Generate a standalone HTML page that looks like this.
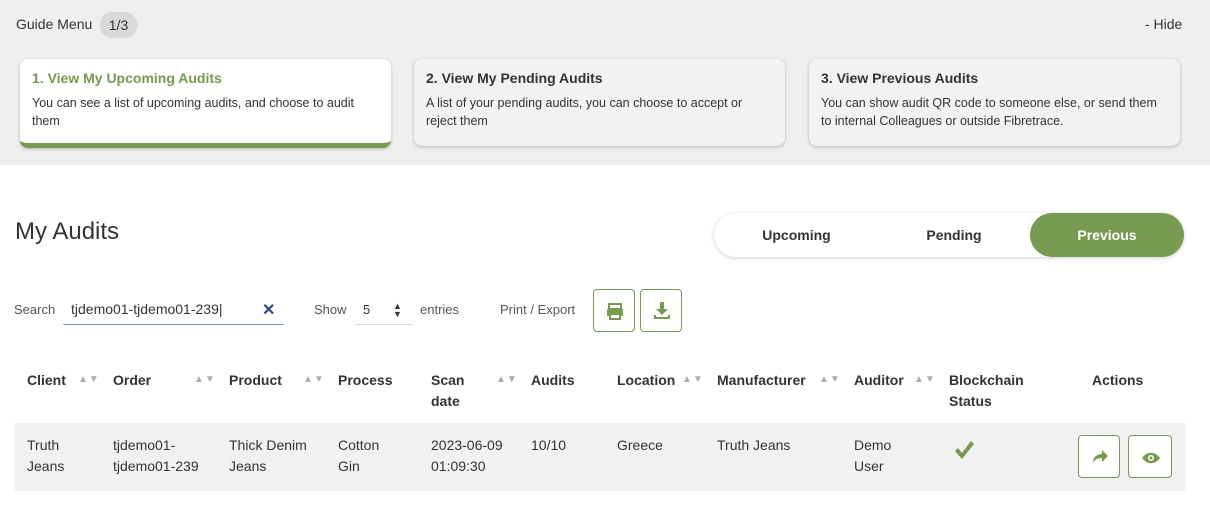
<!DOCTYPE html>
<html><head><meta charset="utf-8"><style>
*{box-sizing:border-box;margin:0;padding:0}
body{width:1210px;height:506px;background:#fff;font-family:"Liberation Sans",sans-serif;color:#333;position:relative;overflow:hidden}
.a{position:absolute}
.top{left:0;top:0;width:1210px;height:165px;background:#efefef}
.card{top:59px;width:371px;height:87px;background:#f2f2f2;border-radius:8px;box-shadow:0 1px 3px rgba(0,0,0,.25);padding:11px 22px 11px 12px}
.card h3{font-size:14px;font-weight:bold;color:#333;margin-bottom:8px}
.card p{font-size:12.5px;line-height:18px;color:#333}
.card.act{background:#fff;border-bottom:5px solid #769a4f}
.card.act h3{color:#769a4f}
.tog{left:714px;top:213px;width:470px;height:44px;border-radius:22px;background:#fff;box-shadow:0 1px 4px rgba(0,0,0,.2)}
.tog span{position:absolute;top:0;height:44px;line-height:44px;font-size:14px;font-weight:bold;text-align:center;color:#333}
.th{font-size:14px;font-weight:bold;color:#333;line-height:21px}
.td{font-size:14px;line-height:21px;color:#333}
.sort{font-size:10px;color:#aaa;letter-spacing:1px}
.btn{border:1px solid #769a4f;border-radius:4px;background:#fff}
</style></head><body>
<div class="a top"></div>
<div class="a" style="left:16px;top:16px;font-size:14px">Guide Menu</div>
<div class="a" style="left:100px;top:12px;width:37px;height:26px;border-radius:12px;background:#d9d9d9;font-size:14px;line-height:26px;text-align:center">1/3</div>
<div class="a" style="left:1145px;top:16px;font-size:14px">- Hide</div>
<div class="a card act" style="left:20px;height:89px"><h3>1. View My Upcoming Audits</h3><p>You can see a list of upcoming audits, and choose to audit them</p></div>
<div class="a card" style="left:414px"><h3>2. View My Pending Audits</h3><p style="padding-right:14px">A list of your pending audits, you can choose to accept or reject them</p></div>
<div class="a card" style="left:809px"><h3>3. View Previous Audits</h3><p>You can show audit QR code to someone else, or send them to internal Colleagues or outside Fibretrace.</p></div>

<div class="a" style="left:15px;top:218px;font-size:24px;color:#333">My Audits</div>
<div class="a tog"><span style="left:0;width:165px">Upcoming</span><span style="left:165px;width:150px">Pending</span><span style="left:316px;width:154px;background:#769a4f;color:#fff;border-radius:22px">Previous</span></div>

<div class="a" style="left:14px;top:302px;font-size:13px;color:#555">Search</div>
<div class="a" style="left:63px;top:297px;width:221px;height:28px;border-bottom:1px solid #7fa0c8;font-size:14px;padding:4px 8px">tjdemo01-tjdemo01-239|</div>
<div class="a" style="left:262px;top:300px;font-size:16px;font-weight:bold;color:#2a4a7f">✕</div>
<div class="a" style="left:314px;top:302px;font-size:13px;color:#555">Show</div>
<div class="a" style="left:355px;top:297px;width:58px;height:28px;border-bottom:1px solid #ddd;font-size:13px;padding:5px 8px">5<span style="position:absolute;left:38px;top:5px;font-size:9px;line-height:8px">▲<br>▼</span></div>
<div class="a" style="left:420px;top:302px;font-size:13px;color:#555">entries</div>
<div class="a" style="left:500px;top:302px;font-size:13px;color:#555">Print / Export</div>
<div class="a btn" style="left:593px;top:289px;width:42px;height:43px"><svg width="42" height="43" viewBox="0 0 42 43"><rect x="15" y="14" width="12" height="5" fill="none" stroke="#769a4f" stroke-width="2"/><rect x="13" y="19" width="16" height="7" rx="1" fill="#769a4f"/><rect x="16" y="24" width="10" height="5" fill="#fff" stroke="#769a4f" stroke-width="2"/></svg></div>
<div class="a btn" style="left:640px;top:289px;width:42px;height:43px"><svg width="42" height="43" viewBox="0 0 42 43"><path d="M19 12h4v7h4l-6 6-6-6h4z" fill="#769a4f"/><path d="M13 25v4h16v-4h-2v2H15v-2z" fill="#769a4f"/></svg></div>

<div class="a th" style="left:27px;top:370px">Client</div><div class="a sort" style="left:78px;top:374px">▲▼</div>
<div class="a th" style="left:113px;top:370px">Order</div><div class="a sort" style="left:194px;top:374px">▲▼</div>
<div class="a th" style="left:229px;top:370px">Product</div><div class="a sort" style="left:303px;top:374px">▲▼</div>
<div class="a th" style="left:338px;top:370px">Process</div>
<div class="a th" style="left:431px;top:370px">Scan<br>date</div><div class="a sort" style="left:496px;top:374px">▲▼</div>
<div class="a th" style="left:531px;top:370px">Audits</div>
<div class="a th" style="left:617px;top:370px">Location</div><div class="a sort" style="left:682px;top:374px">▲▼</div>
<div class="a th" style="left:717px;top:370px">Manufacturer</div><div class="a sort" style="left:819px;top:374px">▲▼</div>
<div class="a th" style="left:854px;top:370px">Auditor</div><div class="a sort" style="left:914px;top:374px">▲▼</div>
<div class="a th" style="left:949px;top:370px">Blockchain<br>Status</div>
<div class="a th" style="left:1092px;top:370px">Actions</div>

<div class="a" style="left:15px;top:423px;width:1170px;height:68px;background:#f1f1f1"></div>
<div class="a td" style="left:27px;top:435px">Truth<br>Jeans</div>
<div class="a td" style="left:113px;top:435px">tjdemo01-<br>tjdemo01-239</div>
<div class="a td" style="left:229px;top:435px">Thick Denim<br>Jeans</div>
<div class="a td" style="left:338px;top:435px">Cotton<br>Gin</div>
<div class="a td" style="left:431px;top:435px">2023-06-09<br>01:09:30</div>
<div class="a td" style="left:531px;top:435px">10/10</div>
<div class="a td" style="left:617px;top:435px">Greece</div>
<div class="a td" style="left:717px;top:435px">Truth Jeans</div>
<div class="a td" style="left:854px;top:435px">Demo<br>User</div>
<svg class="a" style="left:953px;top:439px" width="22" height="22" viewBox="0 0 22 22"><path d="M2 12l3-3 4 5L18 2l3 3-12 15z" fill="#769a4f"/></svg>
<div class="a btn" style="left:1078px;top:435px;width:42px;height:43px"><svg width="42" height="43" viewBox="0 0 42 43"><path d="M14 27c0-6 4-9 9-9v-4l6 6-6 6v-4c-4 0-7 1-9 5z" fill="#769a4f"/></svg></div>
<div class="a btn" style="left:1128px;top:435px;width:44px;height:43px"><svg width="44" height="43" viewBox="0 0 44 43"><path d="M13 22c5-7 13-7 18 0-5 7-13 7-18 0z" fill="#769a4f"/><circle cx="22" cy="22" r="3" fill="#fff"/><circle cx="22" cy="22" r="1.5" fill="#769a4f"/></svg></div>
</body></html>
